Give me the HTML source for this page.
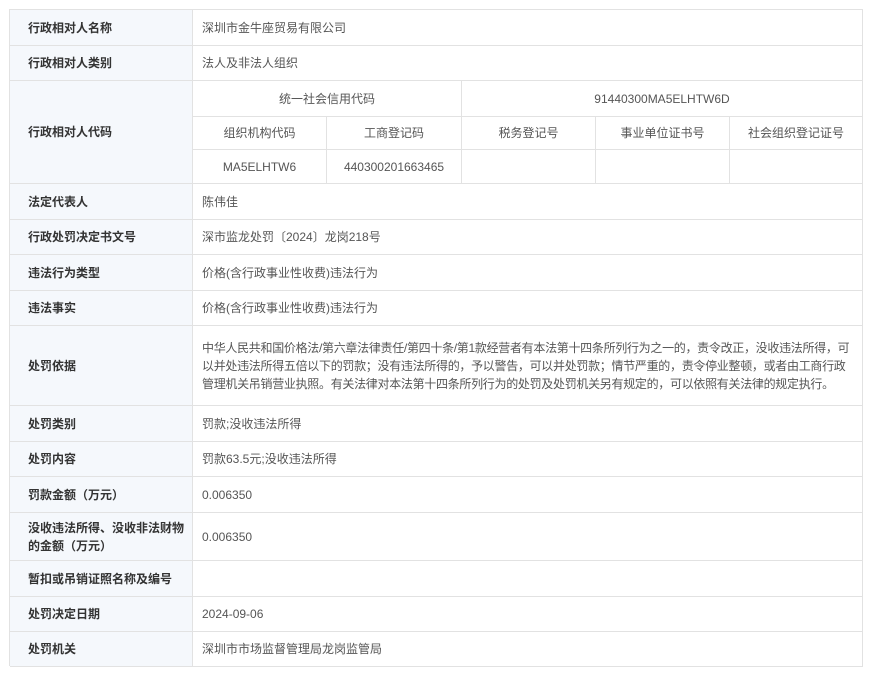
<!DOCTYPE html>
<html><head><meta charset="utf-8"><style>
body{margin:0;background:#fff;width:872px;height:678px;position:relative;font-family:"Liberation Sans","Noto Sans CJK SC",sans-serif;font-size:12px;color:#555}
.c{position:absolute;box-sizing:border-box;border-right:1px solid #e2e2e2;border-bottom:1px solid #e2e2e2;display:flex;align-items:center;line-height:18px}
.l{background:#f5f8fc;color:#333;font-weight:bold;padding-left:18px;padding-right:8px}
.v{padding-left:9px;padding-right:10px}
.m{justify-content:center}
#o{position:absolute;left:9px;top:9px;width:854px;height:657px;border-top:1px solid #e2e2e2;border-left:1px solid #e2e2e2;box-sizing:border-box}
</style></head><body>
<div id="o"></div>
<div class="c l" style="left:10px;top:10px;width:183px;height:36px">行政相对人名称</div>
<div class="c v" style="left:193px;top:10px;width:670px;height:36px">深圳市金牛座贸易有限公司</div>
<div class="c l" style="left:10px;top:46px;width:183px;height:35px">行政相对人类别</div>
<div class="c v" style="left:193px;top:46px;width:670px;height:35px">法人及非法人组织</div>
<div class="c l" style="left:10px;top:81px;width:183px;height:103px">行政相对人代码</div>
<div class="c m" style="left:193px;top:81px;width:269px;height:36px">统一社会信用代码</div>
<div class="c m" style="left:462px;top:81px;width:401px;height:36px">91440300MA5ELHTW6D</div>
<div class="c m" style="left:193px;top:117px;width:134px;height:33px">组织机构代码</div>
<div class="c m" style="left:327px;top:117px;width:135px;height:33px">工商登记码</div>
<div class="c m" style="left:462px;top:117px;width:134px;height:33px">税务登记号</div>
<div class="c m" style="left:596px;top:117px;width:134px;height:33px">事业单位证书号</div>
<div class="c m" style="left:730px;top:117px;width:133px;height:33px">社会组织登记证号</div>
<div class="c m" style="left:193px;top:150px;width:134px;height:34px">MA5ELHTW6</div>
<div class="c m" style="left:327px;top:150px;width:135px;height:34px">440300201663465</div>
<div class="c m" style="left:462px;top:150px;width:134px;height:34px"></div>
<div class="c m" style="left:596px;top:150px;width:134px;height:34px"></div>
<div class="c m" style="left:730px;top:150px;width:133px;height:34px"></div>
<div class="c l" style="left:10px;top:184px;width:183px;height:36px">法定代表人</div>
<div class="c v" style="left:193px;top:184px;width:670px;height:36px">陈伟佳</div>
<div class="c l" style="left:10px;top:220px;width:183px;height:35px">行政处罚决定书文号</div>
<div class="c v" style="left:193px;top:220px;width:670px;height:35px">深市监龙处罚〔2024〕龙岗218号</div>
<div class="c l" style="left:10px;top:255px;width:183px;height:36px">违法行为类型</div>
<div class="c v" style="left:193px;top:255px;width:670px;height:36px">价格(含行政事业性收费)违法行为</div>
<div class="c l" style="left:10px;top:291px;width:183px;height:35px">违法事实</div>
<div class="c v" style="left:193px;top:291px;width:670px;height:35px">价格(含行政事业性收费)违法行为</div>
<div class="c l" style="left:10px;top:326px;width:183px;height:80px">处罚依据</div>
<div class="c v" style="left:193px;top:326px;width:670px;height:80px;letter-spacing:-0.3px">中华人民共和国价格法/第六章法律责任/第四十条/第1款经营者有本法第十四条所列行为之一的，责令改正，没收违法所得，可以并处违法所得五倍以下的罚款；没有违法所得的，予以警告，可以并处罚款；情节严重的，责令停业整顿，或者由工商行政管理机关吊销营业执照。有关法律对本法第十四条所列行为的处罚及处罚机关另有规定的，可以依照有关法律的规定执行。</div>
<div class="c l" style="left:10px;top:406px;width:183px;height:36px">处罚类别</div>
<div class="c v" style="left:193px;top:406px;width:670px;height:36px">罚款;没收违法所得</div>
<div class="c l" style="left:10px;top:442px;width:183px;height:35px">处罚内容</div>
<div class="c v" style="left:193px;top:442px;width:670px;height:35px">罚款63.5元;没收违法所得</div>
<div class="c l" style="left:10px;top:477px;width:183px;height:36px">罚款金额（万元）</div>
<div class="c v" style="left:193px;top:477px;width:670px;height:36px">0.006350</div>
<div class="c l" style="left:10px;top:513px;width:183px;height:48px">没收违法所得、没收非法财物的金额（万元）</div>
<div class="c v" style="left:193px;top:513px;width:670px;height:48px">0.006350</div>
<div class="c l" style="left:10px;top:561px;width:183px;height:36px">暂扣或吊销证照名称及编号</div>
<div class="c v" style="left:193px;top:561px;width:670px;height:36px"></div>
<div class="c l" style="left:10px;top:597px;width:183px;height:35px">处罚决定日期</div>
<div class="c v" style="left:193px;top:597px;width:670px;height:35px">2024-09-06</div>
<div class="c l" style="left:10px;top:632px;width:183px;height:35px">处罚机关</div>
<div class="c v" style="left:193px;top:632px;width:670px;height:35px">深圳市市场监督管理局龙岗监管局</div>
</body></html>
